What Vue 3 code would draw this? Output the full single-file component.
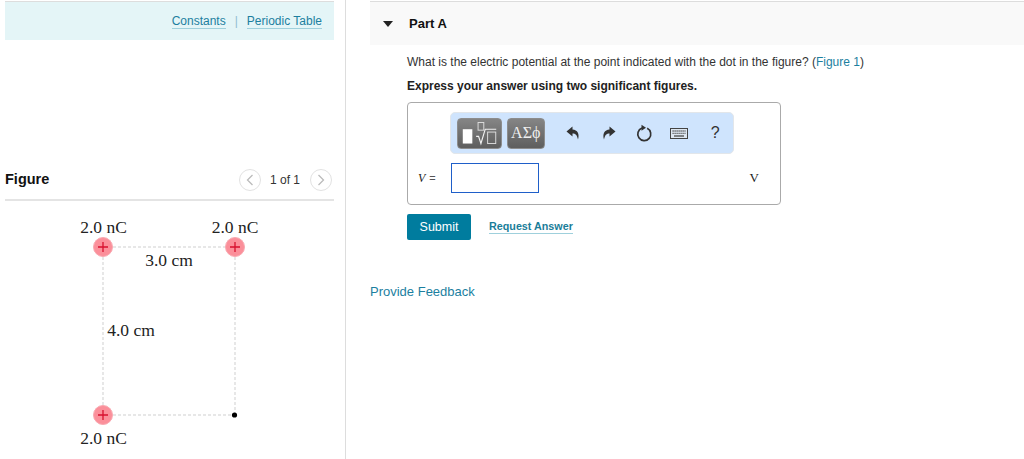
<script setup>
const charges = [
  { x: 103, y: 47 },
  { x: 235, y: 47 },
  { x: 103, y: 215 }
]
const labels = [
  { x: 103.5, y: 33, text: '2.0 nC' },
  { x: 235, y: 33, text: '2.0 nC' },
  { x: 103.5, y: 244, text: '2.0 nC' },
  { x: 169, y: 66, text: '3.0 cm' },
  { x: 131, y: 136, text: '4.0 cm' }
]
const tools = ['undo', 'redo', 'reset', 'keyboard', 'help']
</script>

<template>
  <div class="page">
    <section class="left">
      <div class="links">
        <a class="link">Constants</a>
        <span class="sep">|</span>
        <a class="link">Periodic Table</a>
      </div>
      <div class="figure-head">
        <h2>Figure</h2>
        <div class="pager">
          <span class="round">
            <svg width="8" height="12" viewBox="0 0 8 12"><path d="M6.5 1 1.5 6l5 5" fill="none" stroke="#bbb" stroke-width="1.3" /></svg>
          </span>
          <span class="count">1 of 1</span>
          <span class="round">
            <svg width="8" height="12" viewBox="0 0 8 12"><path d="M1.5 1 6.5 6l-5 5" fill="none" stroke="#bbb" stroke-width="1.3" /></svg>
          </span>
        </div>
      </div>
      <svg class="diagram" width="329" height="258" viewBox="0 0 329 258">
        <path d="M103 47H235M103 47V215M235 47V215M103 215H235" fill="none" stroke="#cfcfcf" stroke-dasharray="3 2" />
        <g v-for="(c, i) in charges" :key="i" :transform="`translate(${c.x} ${c.y})`">
          <circle r="9.5" fill="#fb8f9a" stroke="#f9a9b1" />
          <path d="M-5 0H5M0-5V5" stroke="#d8112f" stroke-width="1.3" />
        </g>
        <circle cx="234.5" cy="215" r="2.6" fill="#000" />
        <text v-for="l in labels" :key="l.text + l.x + l.y" :x="l.x" :y="l.y" class="fig-text" text-anchor="middle">{{ l.text }}</text>
      </svg>
    </section>

    <section class="right">
      <header class="part-head">
        <svg width="10" height="6" viewBox="0 0 10 6"><path d="M0 0H10L5 6Z" fill="#222" /></svg>
        <h3>Part A</h3>
      </header>
      <div class="body">
        <p class="question">What is the electric potential at the point indicated with the dot in the figure? (<a class="plain">Figure 1</a>)</p>
        <p class="hint">Express your answer using two significant figures.</p>
        <div class="answer">
          <div class="toolbar">
            <button class="tb-btn tb-math">
              <svg width="45" height="31" viewBox="0 0 45 31">
                <rect x="5" y="11" width="10" height="15" fill="#fff" />
                <rect x="21" y="4" width="6" height="8" fill="none" stroke="#ddd" />
                <path d="M19 18.5h2.5l2.500 7.500 4.500-15h11.500" fill="none" stroke="#f2f2f2" stroke-width="1.2" />
                <rect x="31" y="14" width="8.500" height="12" fill="none" stroke="#ddd" />
              </svg>
            </button>
            <button class="tb-btn tb-greek">ΑΣϕ</button>
            <div class="tb-icons">
              <span v-for="t in tools" :key="t" class="tb-icon">
                <svg v-if="t === 'undo'" width="14" height="14" viewBox="0 0 14 14"><path d="M6.500 .5 .5 5.500 6.500 10.500V7.500C9.500 7.500 11 9 12 13.500 13.800 8 11.500 3.800 6.500 3.500Z" fill="#333" /></svg>
                <svg v-else-if="t === 'redo'" width="14" height="14" viewBox="0 0 14 14"><path d="M7.500 .5 13.500 5.500 7.500 10.500V7.500C4.500 7.500 3 9 2 13.500 .2 8 2.500 3.800 7.500 3.500Z" fill="#333" /></svg>
                <svg v-else-if="t === 'reset'" width="17" height="18" viewBox="0 0 17 18"><path d="M11.200 4.300A6.500 6.500 0 1 1 6 4" fill="none" stroke="#333" stroke-width="1.700" /><path d="M5.500 .8 10 3.800 5.500 6.800Z" fill="#333" /></svg>
                <svg v-else-if="t === 'keyboard'" class="kbd" width="18" height="11" viewBox="0 0 18 11"><rect x=".5" y=".5" width="17" height="10" fill="#dde6f0" stroke="#444" /><path d="M2.500 3H15.500M2.500 5.300H15.500" stroke="#555" stroke-width="1.300" stroke-dasharray="1.200 .8" /><path d="M4 8H14" stroke="#555" stroke-width="1.400" /></svg>
                <span v-else class="help">?</span>
              </span>
            </div>
          </div>
          <div class="input-row">
            <span class="var"><i>V</i> <span class="eq">=</span></span>
            <span class="field"></span>
            <span class="unit">V</span>
          </div>
        </div>
        <div class="actions">
          <button class="submit">Submit</button>
          <a class="link request">Request Answer</a>
        </div>
      </div>
      <a class="feedback">Provide Feedback</a>
    </section>
  </div>
</template>

<style>
html, body {
  background: #fff;
  overflow: hidden;
}
</style>

<style scoped>
.page {
  width: 1024px;
  height: 459px;
  display: flex;
  overflow: hidden;
  font-family: "Liberation Sans", Arial, sans-serif;
  color: #222;
}

.left {
  width: 346px;
  flex: none;
  box-sizing: border-box;
  padding: 1px 11px 0 5px;
  border-right: 1px solid #ddd;
}

.links {
  height: 38px;
  border-top: 1px solid #ddd;
  background: #e4f5f7;
  display: flex;
  justify-content: flex-end;
  align-items: center;
  gap: 9px;
  padding: 0 12px 0 0;
  font-size: 12px;
}

.link {
  color: #1c7f9f;
  border-bottom: 1px solid #9fd0dc;
  line-height: 14px;
}

.sep {
  color: #8fbdd0;
}

.figure-head {
  height: 161px;
  box-sizing: border-box;
  border-bottom: 2px solid #e4e4e4;
  display: flex;
  justify-content: space-between;
  align-items: flex-end;
  padding: 0 2px 8px 0;
}

.figure-head h2 {
  margin: 0 0 4px;
  font-size: 14.5px;
  font-weight: 700;
  color: #111;
}

.pager {
  display: flex;
  align-items: center;
  font-size: 12px;
  color: #333;
}

.count {
  margin: 0 10px 0 9px;
}

.round {
  width: 22px;
  height: 22px;
  box-sizing: border-box;
  border: 1px solid #e2e2e2;
  border-radius: 50%;
  display: flex;
  align-items: center;
  justify-content: center;
}

.diagram {
  display: block;
  margin-left: -5px;
  margin-top: -1px;
}

.fig-text {
  font-family: "Liberation Serif", serif;
  font-size: 17.5px;
  fill: #222;
}

.right {
  flex: 1;
  padding: 1px 0 0 24px;
}

.part-head {
  height: 43px;
  border-top: 1px solid #ddd;
  background: #f9f9f9;
  display: flex;
  align-items: center;
  padding-left: 13px;
}

.part-head h3 {
  margin: 0 0 0 16px;
  font-size: 13px;
  font-weight: 700;
  color: #111;
}

.body {
  padding-left: 37px;
}

.question {
  margin: 9px 0 0;
  font-size: 12px;
  line-height: 16px;
  color: #333;
}

.plain {
  color: #1c7f9f;
}

.hint {
  margin: 8px 0 0;
  font-size: 12px;
  line-height: 16px;
  font-weight: 700;
  color: #222;
}

.answer {
  width: 374px;
  height: 103px;
  margin-top: 8px;
  box-sizing: border-box;
  border: 1px solid #aaa;
  border-radius: 4px;
  padding: 9px 0 0 42px;
}

.toolbar {
  width: 284px;
  height: 42px;
  box-sizing: border-box;
  background: #cfe4fd;
  border: 1px solid #e2e6ea;
  border-radius: 5px;
  display: flex;
  align-items: center;
  padding-left: 6px;
  gap: 5px;
}

.tb-btn {
  height: 31px;
  width: 45px;
  padding: 0;
  border: 1px solid #8d8d8d;
  border-radius: 4px;
  background: linear-gradient(#858585, #5e5e5e);
  color: #eee;
  font-family: "Liberation Serif", serif;
  font-size: 16px;
  display: flex;
  align-items: center;
  justify-content: center;
}

.tb-icons {
  display: flex;
  align-items: center;
  margin-left: 6px;
}

.tb-icon {
  width: 35.5px;
  display: flex;
  justify-content: center;
  align-items: center;
}

.kbd {
  margin-left: -2px;
}

.help {
  font-size: 16px;
  color: #333;
}

.input-row {
  display: flex;
  align-items: center;
  height: 30px;
  margin: 9px 0 0 -32px;
}

.var {
  width: 33px;
  font-family: "Liberation Serif", serif;
  font-size: 12px;
  color: #222;
}

.eq {
  font-family: "Liberation Sans", sans-serif;
  font-size: 11px;
  color: #555;
  margin-left: 1px;
}

.field {
  width: 88px;
  height: 30px;
  box-sizing: border-box;
  border: 1px solid #1f5fc9;
  background: #fff;
}

.unit {
  margin-left: auto;
  margin-right: 21px;
  font-family: "Liberation Serif", serif;
  font-size: 13px;
}

.actions {
  display: flex;
  align-items: center;
  margin-top: 9px;
}

.submit {
  width: 64px;
  height: 26px;
  padding: 0;
  border: none;
  border-radius: 2px;
  background: #007c9e;
  color: #fff;
  font-family: inherit;
  font-size: 12.5px;
}

.request {
  margin-left: 18px;
  margin-top: -2px;
  font-size: 10.75px;
  font-weight: 700;
  color: #1a7d99;
}

.feedback {
  display: block;
  margin-top: 44px;
  font-size: 13px;
  color: #1c7f9f;
  line-height: 16px;
}
</style>
